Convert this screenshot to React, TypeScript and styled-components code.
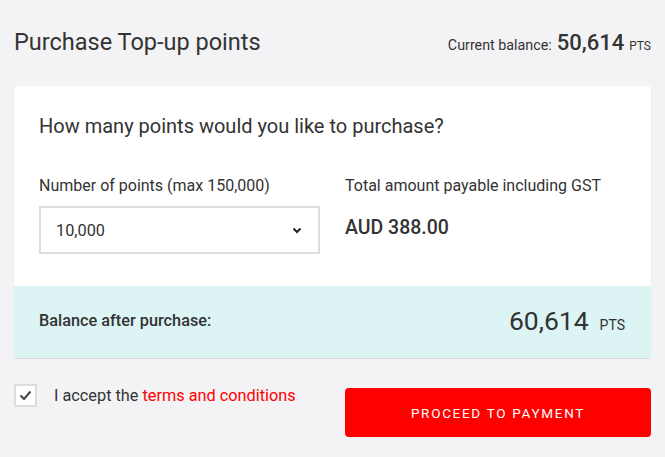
import styled, { createGlobalStyle } from "styled-components";

const GlobalStyle = createGlobalStyle`
  html, body {
    margin: 0;
    padding: 0;
    background: #f3f3f5;
  }
  body {
    font-family: Roboto, "Liberation Sans", sans-serif;
    color: #333;
  }
`;

const Page = styled.div`
  width: 665px;
  height: 457px;
  box-sizing: border-box;
  padding: 0 14px;
  overflow: hidden;
`;

const Header = styled.div`
  display: flex;
  justify-content: space-between;
  align-items: baseline;
  padding-top: 28px;
  height: 86px;
  box-sizing: border-box;
`;

const Title = styled.h1`
  margin: 0;
  font-size: 23.5px;
  line-height: 28px;
  font-weight: 400;
  color: #333;
`;

const Balance = styled.div`
  font-size: 14.3px;
  color: #333;
  b {
    font-size: 22px;
    font-weight: 500;
    margin-left: 5px;
  }
  small {
    font-size: 12px;
    margin-left: 5px;
  }
`;

const Card = styled.div`
  background: #fff;
  border-radius: 4px;
  overflow: hidden;
  box-shadow: 0 1px 1px rgba(0, 0, 0, 0.12);
`;

const CardBody = styled.div`
  padding: 28px 25px 32px;
`;

const Question = styled.h2`
  margin: 0 0 38px;
  font-size: 20px;
  font-weight: 400;
  color: #333;
`;

const Columns = styled.div`
  display: grid;
  grid-template-columns: 281px 1fr;
  gap: 25px;
`;

const Label = styled.div`
  font-size: 16px;
  color: #333;
  margin-bottom: 11px;
`;

const SelectBox = styled.div`
  height: 48px;
  border: 2px solid #ddd;
  box-sizing: border-box;
  display: flex;
  align-items: center;
  justify-content: space-between;
  padding: 0 16px 0 15px;
  font-size: 16.3px;
  color: #333;
`;

const Amount = styled.div`
  font-size: 19.5px;
  font-weight: 500;
  color: #333;
  margin-top: 21px;
`;

const BalanceBar = styled.div`
  background: #dcf4f4;
  height: 72px;
  display: flex;
  align-items: center;
  justify-content: space-between;
  padding: 0 26px 4px 25px;
  box-sizing: border-box;
`;

const BalanceLabel = styled.div`
  font-size: 16.3px;
  font-weight: 500;
  color: #333;
`;

const BalanceValue = styled.div`
  font-size: 26.5px;
  font-weight: 400;
  color: #333;
  small {
    font-size: 14px;
    margin-left: 11px;
  }
`;

const Footer = styled.div`
  display: grid;
  grid-template-columns: 331px 1fr;
  margin-top: 26px;
`;

const Accept = styled.label`
  display: flex;
  align-items: flex-start;
  gap: 17px;
  font-size: 16.3px;
  color: #333;
  line-height: 23px;
  a {
    color: #f00;
    text-decoration: none;
  }
`;

const CheckBox = styled.span`
  width: 23px;
  height: 23px;
  box-sizing: border-box;
  border: 2px solid #ddd;
  background: #fff;
  display: flex;
  align-items: center;
  justify-content: center;
`;

const PayButton = styled.button`
  height: 49px;
  margin-top: 4px;
  border: none;
  border-radius: 4px;
  background: #ff0000;
  color: #fff;
  font-family: inherit;
  font-size: 13.5px;
  letter-spacing: 1.7px;
  cursor: pointer;
`;

export default function App() {
  return (
    <Page>
      <GlobalStyle />
      <Header>
        <Title>Purchase Top-up points</Title>
        <Balance>
          Current balance:<b>50,614</b>
          <small>PTS</small>
        </Balance>
      </Header>
      <Card>
        <CardBody>
          <Question>How many points would you like to purchase?</Question>
          <Columns>
            <div>
              <Label>Number of points (max 150,000)</Label>
              <SelectBox>
                10,000
                <svg width="10" height="7" viewBox="0 0 10 7">
                  <path d="M1.5 1.5 L5 5 L8.5 1.5" fill="none" stroke="#222" strokeWidth="2" />
                </svg>
              </SelectBox>
            </div>
            <div>
              <Label>Total amount payable including GST</Label>
              <Amount>AUD 388.00</Amount>
            </div>
          </Columns>
        </CardBody>
        <BalanceBar>
          <BalanceLabel>Balance after purchase:</BalanceLabel>
          <BalanceValue>
            60,614<small>PTS</small>
          </BalanceValue>
        </BalanceBar>
      </Card>
      <Footer>
        <Accept>
          <CheckBox>
            <svg width="13" height="11" viewBox="0 0 13 11">
              <path d="M1.5 5.5 L5 9 L11.5 1.5" fill="none" stroke="#444" strokeWidth="2" />
            </svg>
          </CheckBox>
          <span>
            I accept the <a href="#">terms and conditions</a>
          </span>
        </Accept>
        <PayButton>PROCEED TO PAYMENT</PayButton>
      </Footer>
    </Page>
  );
}
